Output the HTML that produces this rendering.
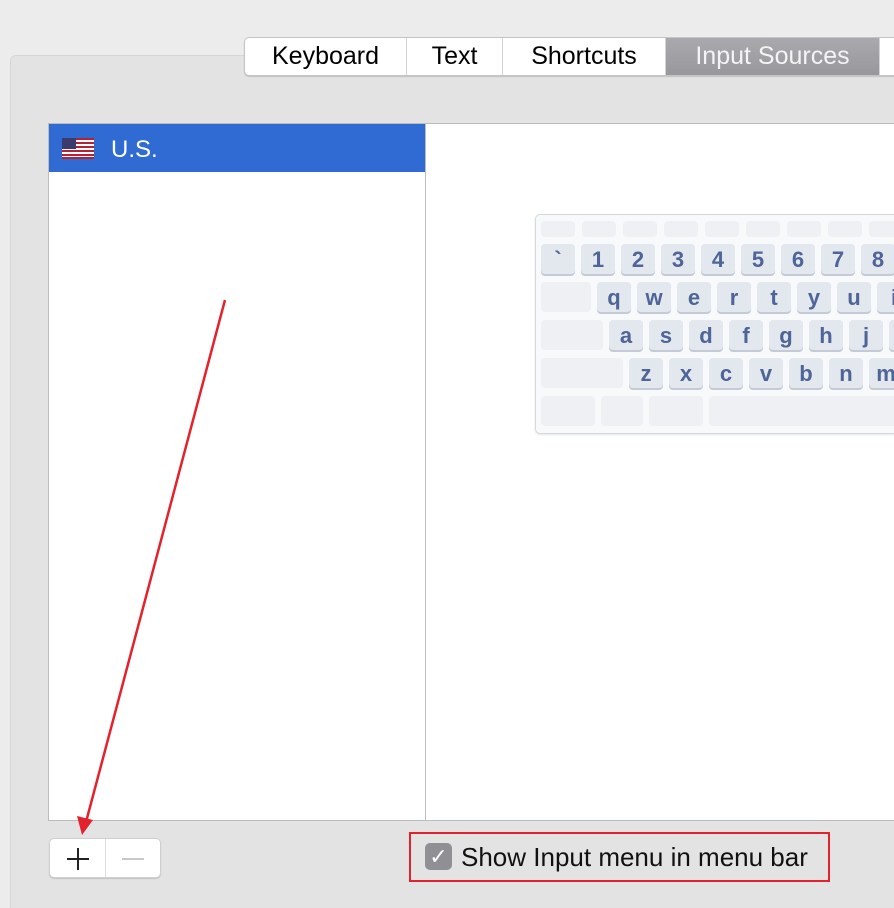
<!DOCTYPE html>
<html><head><style>
html,body{margin:0;width:894px;height:908px;overflow:hidden}
body{background:#ececec;font-family:"Liberation Sans",sans-serif;position:relative}
.abs{position:absolute}
.panel{left:10px;top:55px;width:884px;height:853px;background:#e3e3e3;border-left:1px solid #d6d6d6;border-top:1px solid #d6d6d6;border-radius:6px 0 0 0}
.tabs{left:244px;top:37px;height:37px;display:flex;border:1px solid #c4c4c4;border-right:none;border-radius:5px 0 0 5px;background:#fff;box-shadow:0 1px 1px rgba(0,0,0,.15);overflow:hidden;width:650px}
.tab{font-size:25px;line-height:37px;text-align:center;border-right:1px solid #d4d4d4;color:#000;flex:none}
.list{left:48px;top:123px;width:376px;height:696px;background:#fff;border:1px solid #bdbdbd}
.right{left:425px;top:123px;width:469px;height:696px;background:#fff;border-top:1px solid #bdbdbd;border-bottom:1px solid #bdbdbd;border-left:1px solid #bdbdbd}
.kb{left:535px;top:214px;width:359px;height:218px;background:#f8f9fb;border:1px solid #d5d8dd;border-right:none;border-radius:5px 0 0 5px;box-shadow:0 1px 2px rgba(0,0,0,.1);overflow:hidden}
.k{position:absolute;background:#e3e7ee;border-radius:4px;box-shadow:0 2px 0 #c5cbd6;color:#4f6597;font-weight:bold;font-size:22px;text-align:center;line-height:31px;width:34px;height:30px}
.b{position:absolute;background:#eef0f4;border-radius:4px}
</style></head><body>
<div class="abs panel"></div>
<div class="abs tabs">
<div class="tab" style="width:161px">Keyboard</div>
<div class="tab" style="width:95px">Text</div>
<div class="tab" style="width:162px">Shortcuts</div>
<div class="tab" style="width:213px;background:linear-gradient(#a9a9ae,#98989c);color:#f4f4f4">Input Sources</div>
</div>
<div class="abs list">
<div style="height:48px;background:#2f6bd3;position:relative">
<svg style="position:absolute;left:13px;top:14px" width="32" height="21" viewBox="0 0 32 21">
<rect width="32" height="21" fill="#fff"/>
<g fill="#b22234"><rect y="0" width="32" height="2"/><rect y="4" width="32" height="2"/><rect y="8" width="32" height="2"/><rect y="12" width="32" height="2"/><rect y="16" width="32" height="2"/><rect y="19" width="32" height="2"/></g>
<rect width="14" height="11" fill="#3c3b6e"/></svg>
<span style="position:absolute;left:62px;top:12px;color:#fff;font-size:24px">U.S.</span>
</div></div>
<div class="abs right"></div>
<div class="abs kb" id="kb"></div>
<div class="abs" style="left:49px;top:838px;width:110px;height:38px;background:#fff;border:1px solid #cfcfcf;border-radius:5px;box-shadow:0 1px 1px rgba(0,0,0,.15)">
<div style="position:absolute;left:55px;top:0;width:1px;height:38px;background:#ddd"></div>
<div style="position:absolute;left:17px;top:19px;width:22px;height:2px;background:#222"></div>
<div style="position:absolute;left:27px;top:9px;width:2px;height:22px;background:#222"></div>
<div style="position:absolute;left:72px;top:19px;width:22px;height:2px;background:#c8c8c8"></div>
</div>
<div class="abs" style="left:409px;top:832px;width:417px;height:46px;border:2px solid #e4222d"></div>
<div class="abs" style="left:425px;top:843px;width:27px;height:27px;background:#8f8f94;border-radius:5px;color:#fff;font-size:22px;text-align:center;line-height:27px">✓</div>
<div class="abs" style="left:461px;top:842px;font-size:26px;color:#111;white-space:nowrap">Show Input menu in menu bar</div>
<svg class="abs" style="left:0;top:0" width="894" height="908"><line x1="225" y1="300" x2="86" y2="822" stroke="#e4222d" stroke-width="2.5"/><polygon points="82,835 77,816 93,820" fill="#e4222d"/></svg>
<script>
var kb=document.getElementById('kb');function add(c,x,y,w,h,t){var d=document.createElement('div');d.className=c;d.style.left=(x-536)+'px';d.style.top=(y-215)+'px';if(w)d.style.width=w+'px';if(h)d.style.height=h+'px';if(t)d.textContent=t;kb.appendChild(d);}
for(var i=0;i<10;i++)add('b',541+i*41,221,34,16);
var r=['`','1','2','3','4','5','6','7','8','9'];r.forEach(function(t,i){add('k',541+i*40,244,0,0,t)});
add('b',541,282,50,30);'qwertyuiop'.split('').forEach(function(t,i){add('k',597+i*40,282,0,0,t)});
add('b',541,320,62,30);'asdfghjkl'.split('').forEach(function(t,i){add('k',609+i*40,320,0,0,t)});
add('b',541,358,82,30);'zxcvbnm'.split('').forEach(function(t,i){add('k',629+i*40,358,0,0,t)});
add('b',541,396,54,30);add('b',601,396,42,30);add('b',649,396,54,30);add('b',709,396,200,30);
</script>
</body></html>
